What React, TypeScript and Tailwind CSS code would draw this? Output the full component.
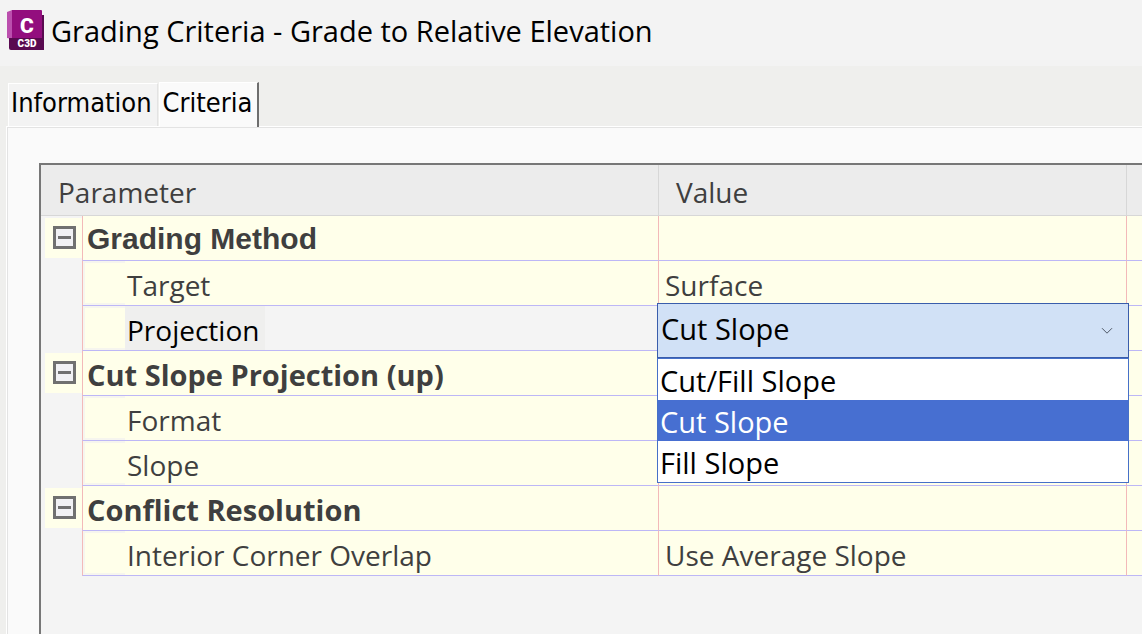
import { useState } from "react";

type Row =
  | { kind: "group"; label: string; arial?: boolean }
  | { kind: "item"; label: string; value: string; editing?: boolean };

const rows: Row[] = [
  { kind: "group", label: "Grading Method", arial: true },
  { kind: "item", label: "Target", value: "Surface" },
  { kind: "item", label: "Projection", value: "Cut Slope", editing: true },
  { kind: "group", label: "Cut Slope Projection (up)" },
  { kind: "item", label: "Format", value: "" },
  { kind: "item", label: "Slope", value: "" },
  { kind: "group", label: "Conflict Resolution" },
  { kind: "item", label: "Interior Corner Overlap", value: "Use Average Slope" },
];

const options = ["Cut/Fill Slope", "Cut Slope", "Fill Slope"];

function Logo() {
  return (
    <svg width="38" height="42" viewBox="0 0 38 42" aria-hidden="true">
      <path d="M35 5h2v34H11z" fill="#5b0a51" />
      <path d="M0 2 5 0v29l-5-1z" fill="#bb4fae" />
      <path d="M5 0h29a1 1 0 0 1 1 1v27H5z" fill="#930e7e" />
      <path d="M35 5h2v35H4a2 2 0 0 1-2-2V28h33z" fill="#590a50" />
      <text x="20" y="23" textAnchor="middle" fontFamily="Roboto, sans-serif" fontWeight="900" fontSize="21" fill="#fff">
        C
      </text>
      <text x="20" y="37" textAnchor="middle" fontFamily="Roboto, sans-serif" fontWeight="900" fontSize="10" fill="#fff">
        C3D
      </text>
    </svg>
  );
}

function ProjectionPicker() {
  const [selected, setSelected] = useState("Cut Slope");
  return (
    <div className="absolute -top-[3px] -left-[2px] z-10 w-[472px] text-[29px] text-black">
      <div className="relative">
        <select
          aria-label="Projection"
          value={selected}
          onChange={(e) => setSelected(e.target.value)}
          className="block h-[55px] w-full appearance-none border border-[#3a5dab] bg-[#d1e1f6] pb-1 pl-[3px] outline-none"
        >
          {options.map((o) => (
            <option key={o}>{o}</option>
          ))}
        </select>
        <svg className="pointer-events-none absolute top-6 right-4" width="12" height="8" viewBox="0 0 12 8" fill="none" stroke="#4f5866">
          <path d="M1 1.2 6 6.2 11 1.2" />
        </svg>
      </div>
      <div role="listbox" aria-label="Projection options" className="border border-[#4670c8] bg-white">
        {options.map((o) => (
          <button
            key={o}
            type="button"
            role="option"
            aria-selected={o === selected}
            onClick={() => setSelected(o)}
            className="block h-[41px] w-full pt-1 pb-px pl-[2px] text-left leading-9 aria-selected:bg-[#476fd1] aria-selected:text-white"
          >
            {o}
          </button>
        ))}
      </div>
    </div>
  );
}

function GridRow({ row }: { row: Row }) {
  const editing = row.kind === "item" && row.editing;
  const cell = "h-[45px] border-b border-b-[#bdb7f6] border-l border-l-[#f3b9b9] p-0";
  return (
    <tr>
      <td className="p-0 align-top">
        {row.kind === "group" && (
          <div className="mt-[2px] ml-1 h-10 bg-[#ffffea] pt-2 pl-2">
            <button
              type="button"
              aria-label={`Collapse ${row.label}`}
              className="flex size-[23px] items-center justify-center border-3 border-[#707070] bg-[#f1f1f4]"
            >
              <span className="h-[3px] w-[13px] bg-[#707070]" />
            </button>
          </div>
        )}
      </td>
      <td className={`${cell} ${editing ? "bg-[#f4f4f4]" : "bg-[#ffffea]"}`}>
        {row.kind === "group" ? (
          <div
            className={`h-[44px] pt-1 pl-1 font-bold ${row.arial ? "font-['Liberation_Sans',sans-serif] text-[30px] leading-[38px]" : "text-[29px] leading-10"}`}
          >
            {row.label}
          </div>
        ) : (
          <div className="flex h-[44px]">
            <div className="w-[42px] shrink-0 bg-[#f6f5ee] py-[2px] pl-[2px]">
              <div className="h-full bg-[#ffffea]" />
            </div>
            <div className={`pt-1 pl-[2px] leading-10 ${editing ? "bg-[#efefee] pr-[6px] text-black" : ""}`}>{row.label}</div>
          </div>
        )}
      </td>
      <td className={`${cell} relative bg-[#ffffea]`}>
        {editing ? <ProjectionPicker /> : row.kind === "item" && <div className="pt-1 pl-[6px] leading-10">{row.value}</div>}
      </td>
      <td className={`${cell} bg-[#ffffea]`} />
    </tr>
  );
}

export default function App() {
  return (
    <div className="flex min-h-screen flex-col overflow-hidden bg-[#efefed] font-['Open_Sans',sans-serif] text-[28px] text-[#3f3f3f]">
      <header className="flex h-[66px] items-start gap-[6px] bg-[#f3f3f3] pt-[10px] pl-[7px]">
        <Logo />
        <h1 className="text-[29px] leading-[42px] text-black">Grading Criteria - Grade to Relative Elevation</h1>
      </header>

      <div role="tablist" className="flex items-end pt-4 pl-2 font-['DejaVu_Sans_Condensed',sans-serif] text-[27px] text-black">
        <button
          type="button"
          role="tab"
          aria-selected="false"
          className="mr-px h-[43px] border border-b-0 border-white border-r-[#e3e3e3] bg-[#f3f3f3] pr-[5px] pb-1 pl-[2px] leading-9"
        >
          Information
        </button>
        <button
          type="button"
          role="tab"
          aria-selected="true"
          className="relative z-10 -mb-px h-[45px] border border-r-2 border-b-0 border-white border-r-[#6e6e6e] bg-[#fafafa] pr-[5px] pb-[5px] pl-[3px] leading-9"
        >
          Criteria
        </button>
      </div>

      <main className="ml-[6px] flex grow flex-col border-t border-l border-white">
        <div className="flex grow flex-col border-t border-l border-[#e3e3e3] bg-[#fafafa] pt-[35px] pl-[31px]">
          <div className="grow border-t-2 border-l-2 border-[#777] bg-[#f4f4f4]">
            <table className="w-full table-fixed border-separate border-spacing-0">
              <colgroup>
                <col className="w-[41px]" />
                <col className="w-[576px]" />
                <col className="w-[468px]" />
                <col />
              </colgroup>
              <thead>
                <tr className="bg-[#ececec] text-left">
                  <th colSpan={2} className="h-[51px] border-b border-[#d7d7d7] p-0 pt-1 pl-[17px] leading-10 font-normal">
                    Parameter
                  </th>
                  <th className="border-b border-l border-[#d7d7d7] p-0 pt-1 pl-[17px] leading-10 font-normal">Value</th>
                  <th className="border-b border-l border-[#d7d7d7] p-0" />
                </tr>
              </thead>
              <tbody>
                {rows.map((row) => (
                  <GridRow key={row.label} row={row} />
                ))}
              </tbody>
            </table>
          </div>
        </div>
      </main>
    </div>
  );
}
